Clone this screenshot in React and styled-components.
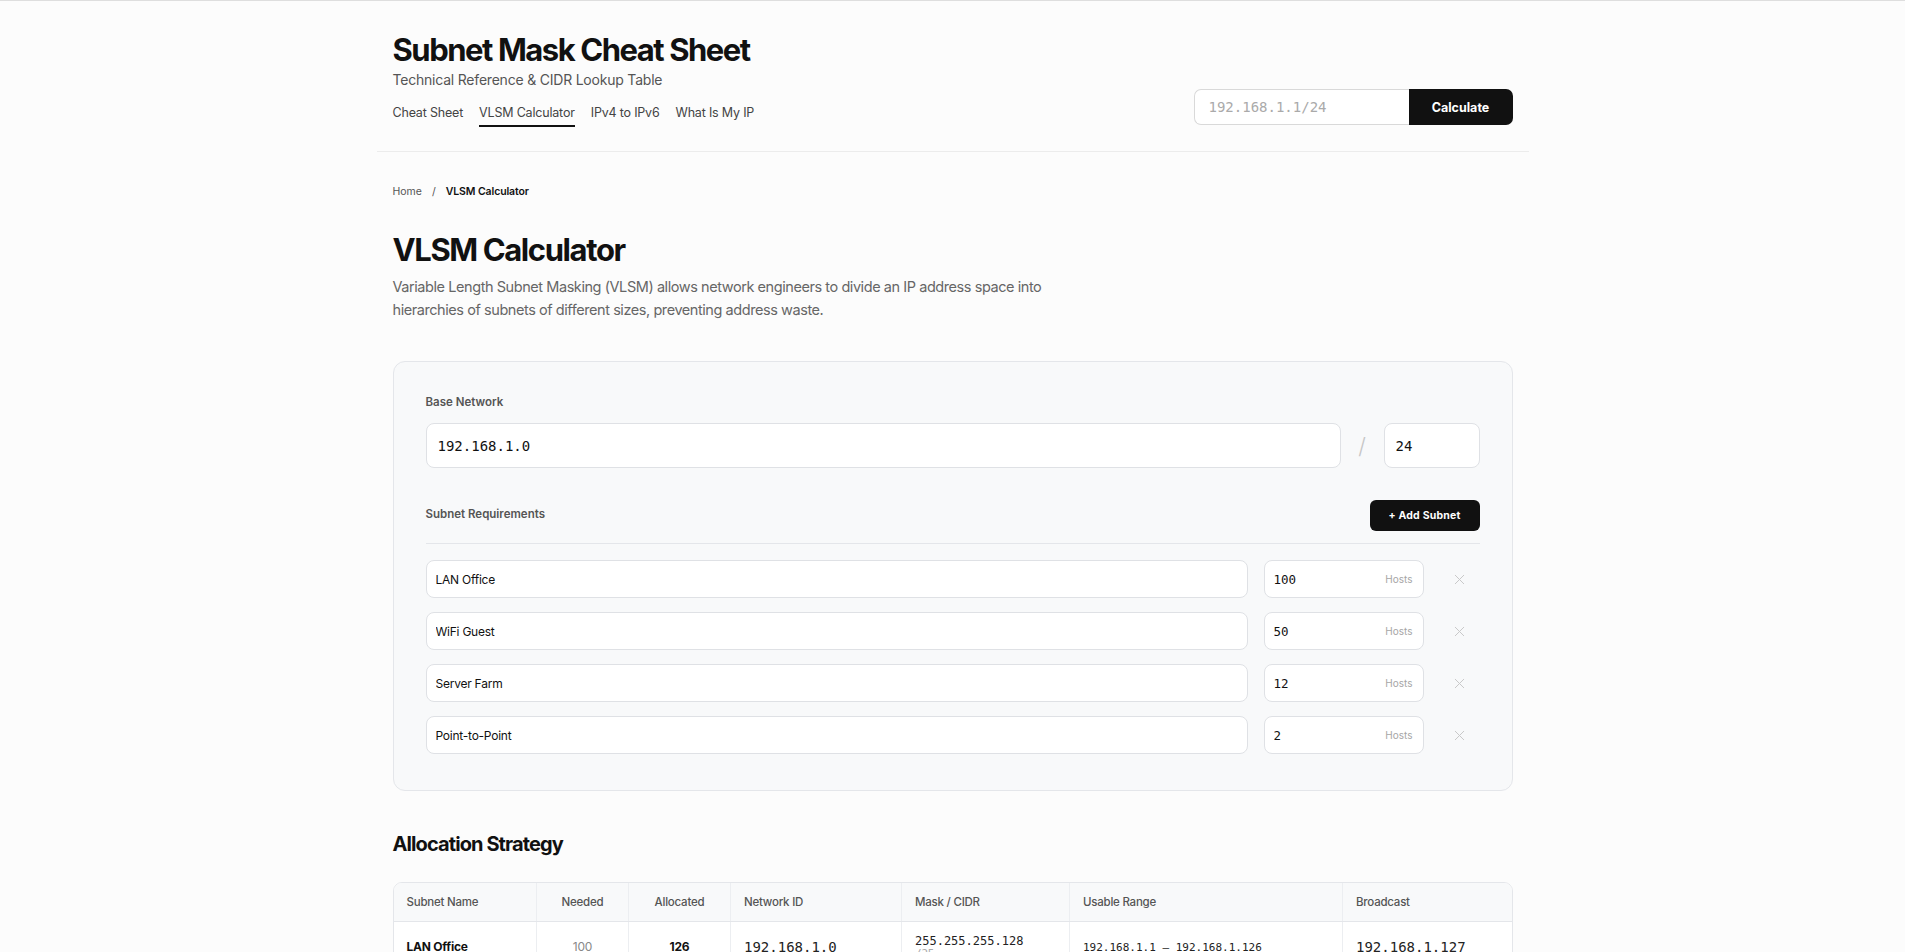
import React from "react";
import styled, { createGlobalStyle } from "styled-components";
import { X } from "lucide-react";

const GlobalStyle = createGlobalStyle`
  * { box-sizing: border-box; }
  html, body { margin: 0; padding: 0; }
  body {
    background: #fcfcfc;
    border-top: 1px solid #dedede;
    font-family: Inter, "Noto Sans", "Liberation Sans", sans-serif;
    color: #111;
    -webkit-font-smoothing: antialiased;
  }
  input { font-family: inherit; }
`;

const MONO = `"DejaVu Sans Mono", "Liberation Mono", monospace`;

const HeaderBar = styled.header`
  max-width: 1152px;
  margin: 0 auto;
  padding: 29px 16px 24px;
  border-bottom: 1px solid #ececec;
  display: flex;
  justify-content: space-between;
  align-items: flex-end;
`;

const Brand = styled.div`
  display: flex;
  flex-direction: column;
`;

const SiteTitle = styled.h1`
  margin: 0;
  font-size: 31px;
  line-height: 40px;
  font-weight: 700;
  letter-spacing: -0.047em;
  color: #111;
`;

const Tagline = styled.p`
  margin: 0;
  font-size: 14px;
  line-height: 20px;
  color: #555;
  letter-spacing: -0.015em;
`;

const Nav = styled.nav`
  display: flex;
  gap: 16px;
  margin-top: 14px;
`;

const NavLink = styled.a`
  font-size: 12.5px;
  line-height: 18px;
  color: #444;
  text-decoration: none;
  padding-bottom: 3px;
  border-bottom: 2px solid ${(p) => (p.$active ? "#111" : "transparent")};
  letter-spacing: -0.015em;
`;

const QuickForm = styled.form`
  display: flex;
  margin-bottom: 2px;
`;

const QuickInput = styled.input`
  width: 215px;
  height: 36px;
  border: 1px solid #d9d9d9;
  border-right: none;
  border-radius: 7px 0 0 7px;
  background: #fff;
  padding: 0 14px;
  font-family: ${MONO};
  font-size: 14px;
  color: #111;
  outline: none;
  &::placeholder { color: #aaa; }
`;

const DarkButton = styled.button`
  background: #111;
  color: #fff;
  border: none;
  font-family: inherit;
  font-weight: 700;
  cursor: pointer;
`;

const QuickButton = styled(DarkButton)`
  width: 104px;
  height: 36px;
  border-radius: 0 7px 7px 0;
  font-size: 12.5px;
`;

const Main = styled.main`
  max-width: 1152px;
  margin: 0 auto;
  padding: 32px 16px 40px;
`;

const Crumbs = styled.div`
  display: flex;
  gap: 10px;
  font-size: 10.5px;
  line-height: 16px;
  color: #555;
`;

const CrumbCurrent = styled.span`
  color: #111;
  font-weight: 600;
  letter-spacing: -0.01em;
`;

const PageTitle = styled.h2`
  margin: 30px 0 5px;
  font-size: 31px;
  line-height: 40px;
  font-weight: 700;
  letter-spacing: -0.045em;
`;

const Lead = styled.p`
  margin: 0;
  max-width: 680px;
  font-size: 14.5px;
  line-height: 23px;
  color: #666;
  letter-spacing: -0.03em;
`;

const Panel = styled.section`
  margin-top: 40px;
  background: #f8f9fa;
  border: 1px solid #e4e6ea;
  border-radius: 12px;
  padding: 32px 32px 36px;
`;

const FieldLabel = styled.div`
  font-size: 11.5px;
  line-height: 16px;
  font-weight: 600;
  color: #555;
`;

const BaseRow = styled.div`
  display: flex;
  align-items: center;
  gap: 16px;
  margin-top: 13px;
`;

const TextBox = styled.input`
  height: ${(p) => p.$h || 45}px;
  width: ${(p) => (p.$w ? `${p.$w}px` : "0")};
  flex: ${(p) => (p.$w ? "0 0 auto" : "1 1 0")};
  min-width: 0;
  border: 1px solid #dfe1e5;
  border-radius: 8px;
  background: #fff;
  padding: 0 ${(p) => (p.$mono ? 11 : 9)}px;
  font-family: ${(p) => (p.$mono ? MONO : "inherit")};
  font-size: ${(p) => (p.$mono ? 14 : 12)}px;
  color: #111;
  outline: none;
  letter-spacing: ${(p) => (p.$mono ? "0" : "-0.02em")};
`;

const Slash = styled.span`
  width: 11px;
  text-align: center;
  font-size: 22px;
  font-weight: 300;
  color: #c6c6c6;
`;

const ReqHead = styled.div`
  display: flex;
  justify-content: space-between;
  align-items: center;
  margin-top: 32px;
  padding-bottom: 12px;
  border-bottom: 1px solid #e4e6ea;
`;

const ReqLabel = styled(FieldLabel)`
  margin-top: -3px;
`;

const AddButton = styled(DarkButton)`
  width: 110px;
  height: 31px;
  border-radius: 6px;
  font-size: 10.5px;
  letter-spacing: 0.02em;
`;

const ReqList = styled.div`
  display: flex;
  flex-direction: column;
  gap: 14px;
  margin-top: 16px;
`;

const ReqRow = styled.div`
  display: flex;
  align-items: center;
  gap: 16px;
`;

const HostsBox = styled.label`
  flex: 0 0 160px;
  width: 160px;
  min-width: 0;
  height: 38px;
  display: flex;
  align-items: center;
  border: 1px solid #dfe1e5;
  border-radius: 8px;
  background: #fff;
  padding: 0 10px 0 9px;
`;

const HostsInput = styled.input`
  flex: 1 1 0;
  width: 0;
  min-width: 0;
  border: none;
  outline: none;
  background: transparent;
  font-family: ${MONO};
  font-size: 12.5px;
  color: #111;
  padding: 0;
`;

const HostsUnit = styled.span`
  font-size: 10px;
  color: #a6a6a6;
`;

const RemoveButton = styled.button`
  flex: 0 0 40px;
  height: 38px;
  display: flex;
  align-items: center;
  justify-content: center;
  border: none;
  background: transparent;
  color: #c8c8c8;
  cursor: pointer;
  padding: 0;
`;

const SectionTitle = styled.h3`
  margin: 39px 0 24px;
  font-size: 20px;
  line-height: 28px;
  font-weight: 700;
  letter-spacing: -0.045em;
`;

const TableWrap = styled.div`
  border: 1px solid #e4e6ea;
  border-radius: 9px;
  overflow: hidden;
  background: #fff;
`;

const Table = styled.table`
  width: 100%;
  border-collapse: collapse;
  table-layout: fixed;
`;

const Th = styled.th`
  height: 38px;
  background: #f8f9fa;
  border-bottom: 1px solid #e4e6ea;
  border-right: 1px solid #eceef1;
  padding: 0 13px;
  font-size: 11.5px;
  font-weight: 500;
  color: #555;
  text-align: ${(p) => (p.$center ? "center" : "left")};
  letter-spacing: -0.02em;
  &:last-child { border-right: none; }
`;

const Td = styled.td`
  padding: 12px 13px;
  border-right: 1px solid #eceef1;
  border-bottom: 1px solid #eceef1;
  vertical-align: middle;
  text-align: ${(p) => (p.$center ? "center" : "left")};
  font-size: 12px;
  color: ${(p) => (p.$muted ? "#888" : "#111")};
  font-weight: ${(p) => (p.$bold ? 700 : 400)};
  letter-spacing: -0.02em;
  &:last-child { border-right: none; }
`;

const Mono = styled.span`
  font-family: ${MONO};
  font-size: ${(p) => p.$size || 14}px;
  line-height: ${(p) => (p.$block ? "14px" : "normal")};
  color: #222;
  letter-spacing: 0;
  white-space: nowrap;
  display: ${(p) => (p.$block ? "block" : "inline")};
`;

const CidrNote = styled.span`
  display: block;
  font-family: ${MONO};
  font-size: 11px;
  line-height: 12px;
  color: #aaa;
`;

const subnets = [
  { name: "LAN Office", hosts: "100" },
  { name: "WiFi Guest", hosts: "50" },
  { name: "Server Farm", hosts: "12" },
  { name: "Point-to-Point", hosts: "2" },
];

const allocations = [
  {
    name: "LAN Office",
    needed: 100,
    allocated: 126,
    network: "192.168.1.0",
    mask: "255.255.255.128",
    cidr: "/25",
    range: "192.168.1.1 – 192.168.1.126",
    broadcast: "192.168.1.127",
  },
  {
    name: "WiFi Guest",
    needed: 50,
    allocated: 62,
    network: "192.168.1.128",
    mask: "255.255.255.192",
    cidr: "/26",
    range: "192.168.1.129 – 192.168.1.190",
    broadcast: "192.168.1.191",
  },
];

const columns = [143, 92, 102, 171, 168, 273, 171];

export default function App() {
  return (
    <>
      <GlobalStyle />
      <HeaderBar>
        <Brand>
          <SiteTitle>Subnet Mask Cheat Sheet</SiteTitle>
          <Tagline>Technical Reference &amp; CIDR Lookup Table</Tagline>
          <Nav>
            <NavLink href="#">Cheat Sheet</NavLink>
            <NavLink href="#" $active>VLSM Calculator</NavLink>
            <NavLink href="#">IPv4 to IPv6</NavLink>
            <NavLink href="#">What Is My IP</NavLink>
          </Nav>
        </Brand>
        <QuickForm onSubmit={(e) => e.preventDefault()}>
          <QuickInput placeholder="192.168.1.1/24" />
          <QuickButton type="submit">Calculate</QuickButton>
        </QuickForm>
      </HeaderBar>

      <Main>
        <Crumbs>
          <span>Home</span>
          <span>/</span>
          <CrumbCurrent>VLSM Calculator</CrumbCurrent>
        </Crumbs>
        <PageTitle>VLSM Calculator</PageTitle>
        <Lead>
          Variable Length Subnet Masking (VLSM) allows network engineers to divide an IP address space into
          hierarchies of subnets of different sizes, preventing address waste.
        </Lead>

        <Panel>
          <FieldLabel>Base Network</FieldLabel>
          <BaseRow>
            <TextBox $mono defaultValue="192.168.1.0" />
            <Slash>/</Slash>
            <TextBox $mono $w={96} defaultValue="24" />
          </BaseRow>

          <ReqHead>
            <ReqLabel>Subnet Requirements</ReqLabel>
            <AddButton type="button">+ Add Subnet</AddButton>
          </ReqHead>

          <ReqList>
            {subnets.map((s) => (
              <ReqRow key={s.name}>
                <TextBox $h={38} defaultValue={s.name} />
                <HostsBox>
                  <HostsInput defaultValue={s.hosts} />
                  <HostsUnit>Hosts</HostsUnit>
                </HostsBox>
                <RemoveButton type="button" aria-label="Remove subnet">
                  <X size={17} strokeWidth={1.4} />
                </RemoveButton>
              </ReqRow>
            ))}
          </ReqList>
        </Panel>

        <SectionTitle>Allocation Strategy</SectionTitle>
        <TableWrap>
          <Table>
            <colgroup>
              {columns.map((w, i) => (
                <col key={i} style={{ width: w }} />
              ))}
            </colgroup>
            <thead>
              <tr>
                <Th>Subnet Name</Th>
                <Th $center>Needed</Th>
                <Th $center>Allocated</Th>
                <Th>Network ID</Th>
                <Th>Mask / CIDR</Th>
                <Th>Usable Range</Th>
                <Th>Broadcast</Th>
              </tr>
            </thead>
            <tbody>
              {allocations.map((a) => (
                <tr key={a.name}>
                  <Td $bold>{a.name}</Td>
                  <Td $center $muted>{a.needed}</Td>
                  <Td $center $bold>{a.allocated}</Td>
                  <Td><Mono>{a.network}</Mono></Td>
                  <Td>
                    <Mono $size={12} $block>{a.mask}</Mono>
                    <CidrNote>{a.cidr}</CidrNote>
                  </Td>
                  <Td><Mono $size={11}>{a.range}</Mono></Td>
                  <Td><Mono>{a.broadcast}</Mono></Td>
                </tr>
              ))}
            </tbody>
          </Table>
        </TableWrap>
      </Main>
    </>
  );
}
